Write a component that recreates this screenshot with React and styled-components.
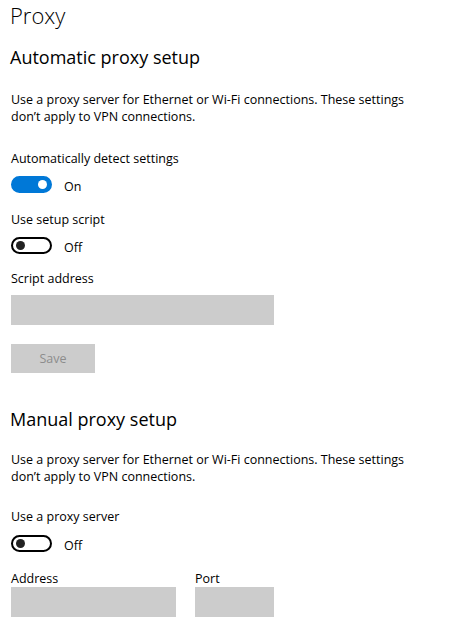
import React from 'react';
import styled, { createGlobalStyle } from 'styled-components';

const GlobalStyle = createGlobalStyle`
  html, body {
    margin: 0;
    padding: 0;
    background: #fff;
  }
  body {
    font-family: "Open Sans", "Liberation Sans", sans-serif;
    color: #000;
  }
`;

const Page = styled.div`
  width: 474px;
  height: 620px;
  overflow: hidden;
  padding-left: 11px;
  box-sizing: border-box;
  display: flex;
  flex-direction: column;
  align-items: flex-start;
`;

const Title = styled.h1`
  margin: 0 0 0 -1px;
  font-size: 22px;
  font-weight: 300;
  line-height: 30px;
`;

const SectionTitle = styled.h2`
  margin: ${(p) => p.$top}px 0 0 -1px;
  font-size: 18px;
  font-weight: 400;
  line-height: 24px;
`;

const Description = styled.p`
  margin: ${(p) => p.$top}px 0 0 0;
  font-size: 12.5px;
  line-height: 16.5px;
  width: 405px;
`;

const Label = styled.div`
  margin-top: ${(p) => p.$top}px;
  font-size: 12.5px;
  line-height: 16px;
`;

const ToggleRow = styled.div`
  margin-top: ${(p) => p.$top}px;
  height: 17px;
  display: flex;
  align-items: flex-start;
  gap: 12px;
`;

const Track = styled.div`
  width: 41px;
  height: 17px;
  box-sizing: border-box;
  border-radius: 9px;
  display: flex;
  align-items: center;
  padding: 0 3px;
  justify-content: ${(p) => (p.$on ? 'flex-end' : 'flex-start')};
  background: ${(p) => (p.$on ? '#0078d7' : '#fff')};
  border: 2px solid ${(p) => (p.$on ? '#0078d7' : '#000')};
`;

const Knob = styled.span`
  width: 9px;
  height: 9px;
  border-radius: 50%;
  background: ${(p) => (p.$on ? '#fff' : '#222')};
`;

const StateText = styled.span`
  margin-top: 3px;
  font-size: 12.5px;
  line-height: 16px;
`;

const Input = styled.div`
  margin-top: ${(p) => p.$top || 0}px;
  width: ${(p) => p.$width}px;
  height: 30px;
  background: #cccccc;
`;

const Button = styled.button`
  margin-top: 19px;
  width: 84px;
  height: 29px;
  border: none;
  padding: 0;
  background: #cccccc;
  color: #8c8c8c;
  font-family: inherit;
  font-size: 12.5px;
`;

const FieldRow = styled.div`
  margin-top: 19px;
  display: flex;
  gap: 19px;
`;

const Field = styled.div`
  display: flex;
  flex-direction: column;
`;

function Toggle({ on, top }) {
  return (
    <ToggleRow $top={top}>
      <Track $on={on}>
        <Knob $on={on} />
      </Track>
      <StateText>{on ? 'On' : 'Off'}</StateText>
    </ToggleRow>
  );
}

const descText =
  'Use a proxy server for Ethernet or Wi-Fi connections. These settings don\u2019t apply to VPN connections.';

export default function App() {
  return (
    <>
      <GlobalStyle />
      <Page>
        <Title>Proxy</Title>
        <SectionTitle $top={15}>Automatic proxy setup</SectionTitle>
        <Description $top={23}>{descText}</Description>
        <Label $top={26}>Automatically detect settings</Label>
        <Toggle on top={9} />
        <Label $top={19}>Use setup script</Label>
        <Toggle on={false} top={9} />
        <Label $top={17}>Script address</Label>
        <Input $top={8} $width={263} />
        <Button disabled>Save</Button>
        <SectionTitle $top={34}>Manual proxy setup</SectionTitle>
        <Description $top={21}>{descText}</Description>
        <Label $top={24}>Use a proxy server</Label>
        <Toggle on={false} top={10} />
        <FieldRow>
          <Field>
            <Label $top={0}>Address</Label>
            <Input $width={165} />
          </Field>
          <Field>
            <Label $top={0}>Port</Label>
            <Input $width={79} />
          </Field>
        </FieldRow>
      </Page>
    </>
  );
}
